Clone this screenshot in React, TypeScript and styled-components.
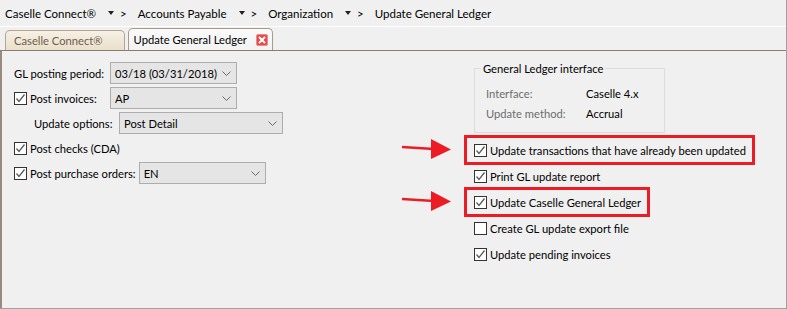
import { type ReactElement, type ReactNode } from "react";
import styled, { createGlobalStyle } from "styled-components";

const GlobalStyle = createGlobalStyle`
  html, body {
    margin: 0;
    padding: 0;
    background: #f0f0f0;
  }
  * {
    box-sizing: border-box;
  }
`;

const Window = styled.div`
  width: 787px;
  height: 309px;
  display: flex;
  flex-direction: column;
  background: #f0f0f0;
  border-right: 1px solid #a0a0a0;
  border-bottom: 1px solid #a0a0a0;
  font-family: Lato, "Open Sans", sans-serif;
  font-size: 11.2px;
  color: #000;
  overflow: hidden;
`;

const Breadcrumbs = styled.nav`
  height: 27px;
  display: flex;
  align-items: center;
  padding-left: 5px;
  border-bottom: 1px solid #ffffff;
  font-size: 11.5px;
`;

const Crumb = styled.span`
  display: inline-flex;
  align-items: center;
  white-space: nowrap;
`;

const CrumbArrow = styled.span`
  display: inline-flex;
  align-items: center;
  gap: 6px;
  margin: 0 11px 0 12px;
`;

const TabStrip = styled.div`
  height: 24px;
  display: flex;
  align-items: flex-end;
  gap: 3px;
  padding-left: 5px;
  border-bottom: 1px solid #8e7b6b;
`;

const Tab = styled.div<{ $active?: boolean }>`
  height: ${(p) => (p.$active ? "22px" : "20px")};
  display: flex;
  align-items: center;
  gap: 9px;
  padding: 0 ${(p) => (p.$active ? "4px" : "21px")} 0 ${(p) => (p.$active ? "5px" : "8px")};
  border: 1px solid ${(p) => (p.$active ? "#a9998a" : "#b3a390")};
  border-bottom: none;
  border-radius: 5px 5px 0 0;
  background: ${(p) =>
    p.$active
      ? "linear-gradient(#fafafa, #f2f2f2)"
      : "linear-gradient(#f6f1e6, #e9dfca)"};
  color: ${(p) => (p.$active ? "#000" : "#6f5d4c")};
  white-space: nowrap;
`;

const CloseButton = styled.span`
  width: 12px;
  height: 12px;
  display: flex;
  align-items: center;
  justify-content: center;
  border: 1px solid #e98a8a;
  border-radius: 2px;
  background: #e64c4c;
`;

const Panel = styled.main`
  flex: 1;
  display: flex;
  padding: 11px 0 0 12px;
  border-left: 2px solid #9a8a7c;
`;

const LeftColumn = styled.section`
  width: 460px;
  display: flex;
  flex-direction: column;
  gap: 3px;
`;

const Row = styled.div<{ $indent?: number; $height?: number }>`
  height: ${(p) => p.$height ?? 22}px;
  display: flex;
  align-items: center;
  padding-left: ${(p) => p.$indent ?? 0}px;
`;

const Label = styled.label<{ $width?: number }>`
  display: flex;
  align-items: center;
  gap: 3px;
  width: ${(p) => (p.$width ? `${p.$width}px` : "auto")};
  margin-right: ${(p) => (p.$width ? 0 : 3)}px;
  white-space: nowrap;
`;

const SelectBox = styled.div<{ $width: number }>`
  width: ${(p) => p.$width}px;
  height: 22px;
  display: flex;
  align-items: center;
  justify-content: space-between;
  padding: 0 5px 0 4px;
  border: 1px solid #adadad;
  background: #e5e5e5;
`;

const Box = styled.span`
  width: 13px;
  height: 13px;
  flex: none;
  display: flex;
  align-items: center;
  justify-content: center;
  border: 1px solid #333333;
  background: #ffffff;
`;

const RightColumn = styled.section`
  display: flex;
  flex-direction: column;
`;

const GroupBox = styled.fieldset`
  width: 191px;
  height: 71px;
  margin: 0;
  padding: 11px 0 0 6px;
  border: 1px solid #dcdcdc;
`;

const Legend = styled.legend`
  padding: 0 2px;
`;

const InfoGrid = styled.div`
  display: grid;
  grid-template-columns: 100px auto;
  row-gap: 4px;
  padding-left: 5px;
  line-height: 16px;
`;

const InfoLabel = styled.span`
  color: #6d6d6d;
`;

const OptionList = styled.div`
  display: flex;
  flex-direction: column;
  align-items: flex-start;
  gap: 10px;
  margin-top: 9px;
`;

const Option = styled.label<{ $highlight?: boolean }>`
  position: relative;
  height: 16px;
  display: flex;
  align-items: center;
  gap: 3px;
  white-space: nowrap;
  ${(p) =>
    p.$highlight &&
    `
    height: 24px;
    margin: -4px -6px -4px -7px;
    padding: 0 6px 0 7px;
    outline: 3px solid #ed1c24;
  `}
`;

const Pointer = styled.svg`
  position: absolute;
  left: -65px;
  top: 50%;
  width: 50px;
  height: 22px;
  margin-top: -12px;
`;

function Chevron(): ReactElement {
  return (
    <svg width="9" height="5" viewBox="0 0 9 5">
      <polyline points="0.5,0.5 4.5,4.5 8.5,0.5" fill="none" stroke="#6a6a6a" strokeWidth="1" />
    </svg>
  );
}

function Select({ value, width }: { value: string; width: number }): ReactElement {
  return (
    <SelectBox $width={width}>
      <span>{value}</span>
      <Chevron />
    </SelectBox>
  );
}

function Checkbox({ checked }: { checked: boolean }): ReactElement {
  return (
    <Box>
      {checked && (
        <svg width="11" height="11" viewBox="0 0 11 11">
          <polyline points="1.5,5.5 4,8.5 9.5,1.5" fill="none" stroke="#5a5a5a" strokeWidth="1.3" />
        </svg>
      )}
    </Box>
  );
}

function Arrow(): ReactElement {
  return (
    <Pointer viewBox="0 0 50 22">
      <line x1="0" y1="9" x2="32" y2="11" stroke="#ed1c24" strokeWidth="2.5" />
      <polygon points="29,1 49,11.5 29,21" fill="#ed1c24" />
    </Pointer>
  );
}

function CheckOption({
  children,
  checked = true,
  highlight,
}: {
  children: ReactNode;
  checked?: boolean;
  highlight?: boolean;
}): ReactElement {
  return (
    <Option $highlight={highlight}>
      {highlight && <Arrow />}
      <Checkbox checked={checked} />
      {children}
    </Option>
  );
}

export default function App(): ReactElement {
  const crumbs = ["Caselle Connect®", "Accounts Payable", "Organization"];

  return (
    <Window>
      <GlobalStyle />
      <Breadcrumbs>
        {crumbs.map((c) => (
          <Crumb key={c}>
            {c}
            <CrumbArrow>
              <svg width="6" height="4" viewBox="0 0 6 4">
                <polygon points="0,0 6,0 3,4" fill="#222" />
              </svg>
              &gt;
            </CrumbArrow>
          </Crumb>
        ))}
        <Crumb>Update General Ledger</Crumb>
      </Breadcrumbs>

      <TabStrip>
        <Tab>Caselle Connect®</Tab>
        <Tab $active>
          Update General Ledger
          <CloseButton>
            <svg width="8" height="8" viewBox="0 0 8 8">
              <path d="M1 1 L7 7 M7 1 L1 7" stroke="#fff" strokeWidth="1.8" />
            </svg>
          </CloseButton>
        </Tab>
      </TabStrip>

      <Panel>
        <LeftColumn>
          <Row>
            <Label $width={96}>GL posting period:</Label>
            <Select value="03/18 (03/31/2018)" width={127} />
          </Row>
          <Row>
            <Label $width={96}>
              <Checkbox checked />
              Post invoices:
            </Label>
            <Select value="AP" width={127} />
          </Row>
          <Row $indent={20}>
            <Label $width={85}>Update options:</Label>
            <Select value="Post Detail" width={164} />
          </Row>
          <Row $height={22}>
            <Label>
              <Checkbox checked />
              Post checks (CDA)
            </Label>
          </Row>
          <Row>
            <Label>
              <Checkbox checked />
              Post purchase orders:
            </Label>
            <Select value="EN" width={127} />
          </Row>
        </LeftColumn>

        <RightColumn>
          <GroupBox>
            <Legend>General Ledger interface</Legend>
            <InfoGrid>
              <InfoLabel>Interface:</InfoLabel>
              <span>Caselle 4.x</span>
              <InfoLabel>Update method:</InfoLabel>
              <span>Accrual</span>
            </InfoGrid>
          </GroupBox>
          <OptionList>
            <CheckOption highlight>Update transactions that have already been updated</CheckOption>
            <CheckOption>Print GL update report</CheckOption>
            <CheckOption highlight>Update Caselle General Ledger</CheckOption>
            <CheckOption checked={false}>Create GL update export file</CheckOption>
            <CheckOption>Update pending invoices</CheckOption>
          </OptionList>
        </RightColumn>
      </Panel>
    </Window>
  );
}
